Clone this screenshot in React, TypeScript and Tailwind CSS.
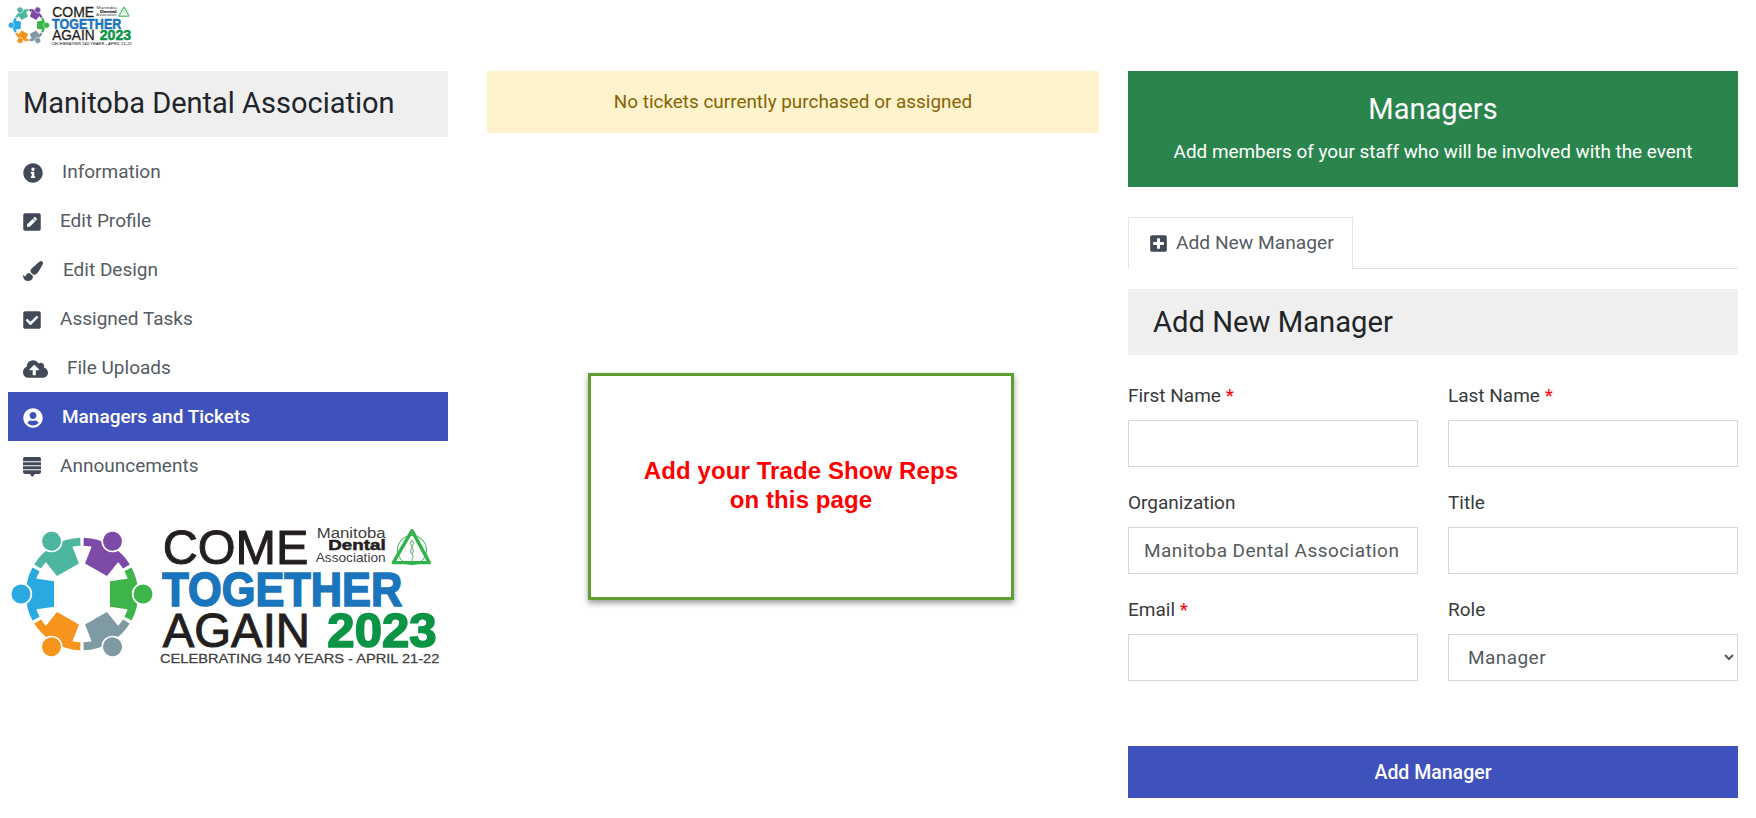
import React from "react";
import { FaInfoCircle, FaPenSquare, FaPaintBrush, FaCheckSquare, FaCloudUploadAlt, FaUserCircle, FaPlusSquare } from "react-icons/fa";

const people = [
  { a: -30, c: "#4db6a0" },
  { a: 30, c: "#7d4aa8" },
  { a: 90, c: "#3db54a" },
  { a: 150, c: "#7f9aa3" },
  { a: 210, c: "#f7941d" },
  { a: 270, c: "#29a9e0" },
];

function Logo({ className }: { className: string }) {
  const sans = "'Liberation Sans', Arial, sans-serif";
  return (
    <svg viewBox="24 0 1320 510" className={className} role="img">
      <g transform="translate(246 252)">
        {people.map((p) => (
          <g key={p.a} transform={`rotate(${p.a})`}>
            <path d="M-74 -138 A157 157 0 0 1 74 -138" fill="none" stroke={p.c} strokeWidth="24" />
            <path d="M-48 -150 L48 -150 L38 -84 L-38 -84 Z" fill={p.c} />
            <circle cx="0" cy="-183" r="31" fill={p.c} stroke="#fff" strokeWidth="5" />
          </g>
        ))}
      </g>
      <g stroke="#231f20" strokeWidth="3">
        <text x="488" y="162" fontFamily={sans} fontSize="146" textLength="437" lengthAdjust="spacingAndGlyphs" fill="#231f20">COME</text>
        <text x="488" y="410" fontFamily={sans} fontSize="146" textLength="442" lengthAdjust="spacingAndGlyphs" fill="#231f20">AGAIN</text>
      </g>
      <text x="950" y="84" fontFamily={sans} fontSize="42" textLength="207" lengthAdjust="spacingAndGlyphs" fill="#414042">Manitoba</text>
      <text x="985" y="120" fontFamily={sans} fontWeight="700" fontSize="42" textLength="172" lengthAdjust="spacingAndGlyphs" fill="#231f20" stroke="#231f20" strokeWidth="1.5">Dental</text>
      <text x="947" y="157" fontFamily={sans} fontSize="40" textLength="210" lengthAdjust="spacingAndGlyphs" fill="#414042">Association</text>
      <g fill="none" stroke="#2fb24a">
        <path d="M1236 62 L1288 158 L1180 158 Z" strokeWidth="10" strokeLinejoin="round" />
        <circle cx="1236" cy="120" r="44" strokeWidth="3" />
        <path d="M1236 90 C1250 105 1222 118 1236 132 C1246 142 1230 150 1236 156 M1236 90 C1222 105 1250 118 1236 132" strokeWidth="3" stroke="#5aa86a" />
      </g>
      <text x="487" y="288" fontFamily={sans} fontWeight="700" fontSize="146" textLength="720" lengthAdjust="spacingAndGlyphs" fill="#1b75bc" stroke="#1b75bc" strokeWidth="5">TOGETHER</text>
      <text x="982" y="410" fontFamily={sans} fontWeight="700" fontSize="146" textLength="328" lengthAdjust="spacingAndGlyphs" fill="#0b9444" stroke="#0b9444" strokeWidth="5">2023</text>
      <text x="480" y="459" fontFamily={sans} fontSize="39" textLength="838" lengthAdjust="spacingAndGlyphs" fill="#414042" stroke="#414042" strokeWidth="0.8">CELEBRATING 140 YEARS - APRIL 21-22</text>
    </svg>
  );
}

function ChatLines({ className }: { className?: string }) {
  return (
    <svg viewBox="0 0 18 20" className={className} fill="currentColor">
      <path d="M2 0h14a2 2 0 0 1 2 2v13a2 2 0 0 1-2 2h-4l-3 3-2-3H2a2 2 0 0 1-2-2V2a2 2 0 0 1 2-2z" />
      <path d="M0 4.2h18v1H0zM0 8.2h18v1H0zM0 12.2h18v1H0z" fill="#fff" />
    </svg>
  );
}

const nav = [
  { label: "Information", Icon: FaInfoCircle, w: "w-[20px]", h: "h-[20px]", ml: "ml-[19px]" },
  { label: "Edit Profile", Icon: FaPenSquare, w: "w-[18px]", h: "h-[20px]", ml: "ml-[19px]" },
  { label: "Edit Design", Icon: FaPaintBrush, w: "w-[20px]", h: "h-[20px]", ml: "ml-[20px]" },
  { label: "Assigned Tasks", Icon: FaCheckSquare, w: "w-[18px]", h: "h-[20px]", ml: "ml-[19px]" },
  { label: "File Uploads", Icon: FaCloudUploadAlt, w: "w-[25px]", h: "h-[22px]", ml: "ml-[19px]" },
  { label: "Managers and Tickets", Icon: FaUserCircle, w: "w-[20px]", h: "h-[20px]", ml: "ml-[19px]", active: true },
  { label: "Announcements", Icon: ChatLines, w: "w-[18px]", h: "h-[20px]", ml: "ml-[19px]" },
];

function Field({ label, required, value }: { label: string; required?: boolean; value?: string }) {
  return (
    <div>
      <label className="block h-[30px] leading-[31px] text-[19px] text-[#373a3c]">
        {label}
        {required && <span className="text-[#ff0000]"> *</span>}
      </label>
      <input
        readOnly
        value={value ?? ""}
        className="mt-[10px] block w-full h-[47px] border border-[#d5d8de] bg-white px-[15px] text-[19px] tracking-[0.44px] text-[#55595c] outline-none"
      />
    </div>
  );
}

export default function App() {
  return (
    <div className="bg-white min-h-[818px] font-[Roboto,sans-serif]">
      <header className="h-[71px] pt-px pl-[7px]">
        <Logo className="block w-[128px] h-[49px]" />
      </header>
      <main className="flex items-start pl-[8px]">
        <aside className="w-[440px] shrink-0">
          <div className="h-[66px] bg-[#efefef] pl-[15px] flex items-center text-[29px] text-[#212529]">Manitoba Dental Association</div>
          <nav className="mt-[10px]">
            {nav.map(({ label, Icon, w, h, active, ml }) => (
              <div
                key={label}
                className={`flex items-center h-[49px] pl-[15px] pt-[2px] text-[19px] ${active ? "bg-[#3f51bd] text-white font-medium" : "text-[#555b63]"}`}
              >
                <Icon className={`${w} ${h} shrink-0 ${active ? "text-white" : "text-[#414a56]"}`} />
                <span className={ml}>{label}</span>
              </div>
            ))}
          </nav>
          <Logo className="block mt-[20px] w-[440px] h-[170px]" />
        </aside>
        <section className="ml-[39px] w-[612px] shrink-0">
          <div className="h-[62px] pt-[1px] bg-[#fff3cd] flex items-center justify-center text-[18.9px] text-[#856404]">No tickets currently purchased or assigned</div>
          <div className="ml-[101px] mt-[240px] w-[426px] h-[227px] pb-[4px] border-[3px] border-[#5f9f2f] bg-white shadow-[0_3px_6px_rgba(0,0,0,0.4)] flex items-center justify-center text-center font-['Liberation_Sans',Arial,sans-serif] font-bold text-[24px] leading-[29px] tracking-[0.1px] text-[#ff0000]">
            <p>Add your Trade Show Reps<br />on this page</p>
          </div>
        </section>
        <section className="ml-[29px] w-[610px] shrink-0">
          <div className="h-[116px] bg-[#2a854d] text-white text-center flex flex-col items-center pt-[21px]">
            <h2 className="text-[29px] leading-[34px]">Managers</h2>
            <p className="mt-[13px] text-[18.9px] leading-[26px]">Add members of your staff who will be involved with the event</p>
          </div>
          <div className="mt-[30px] h-[52px] border-b border-[#dee2e6] flex">
            <div className="w-[225px] h-[52px] bg-white border border-b-0 border-[#e3e5ea] pl-[20px] flex items-center text-[19.2px] text-[#555b63]">
              <FaPlusSquare className="w-[19px] h-[19px] text-[#414a56] shrink-0" />
              <span className="ml-[8px]">Add New Manager</span>
            </div>
          </div>
          <div className="mt-[20px] h-[66px] pt-[2px] bg-[#efefef] pl-[25px] flex items-center text-[29.2px] text-[#212529]">Add New Manager</div>
          <form className="mt-[25px]">
            <div className="grid grid-cols-2 gap-x-[30px] gap-y-[20px]">
              <Field label="First Name" required />
              <Field label="Last Name" required />
              <Field label="Organization" value="Manitoba Dental Association" />
              <Field label="Title" />
              <Field label="Email" required />
              <div>
                <label className="block h-[30px] leading-[31px] text-[19px] text-[#373a3c]">Role</label>
                <select className="mt-[10px] block w-full h-[47px] border border-[#d5d8de] bg-white pl-[15px] text-[19px] tracking-[0.44px] text-[#55595c] outline-none" defaultValue="Manager">
                  <option>Manager</option>
                </select>
              </div>
            </div>
            <button type="button" className="mt-[65px] block w-full h-[52px] pt-[2px] bg-[#3f51bd] text-white text-[19.5px] font-medium">Add Manager</button>
          </form>
        </section>
      </main>
    </div>
  );
}
